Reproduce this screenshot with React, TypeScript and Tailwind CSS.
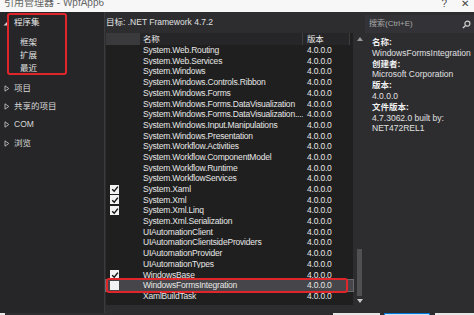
import React from 'react';

type Row = { name: string; checked?: boolean; box?: boolean; selected?: boolean };

const rows: Row[] = [
  { name: 'System.Web.Routing' },
  { name: 'System.Web.Services' },
  { name: 'System.Windows' },
  { name: 'System.Windows.Controls.Ribbon' },
  { name: 'System.Windows.Forms' },
  { name: 'System.Windows.Forms.DataVisualization' },
  { name: 'System.Windows.Forms.DataVisualization....' },
  { name: 'System.Windows.Input.Manipulations' },
  { name: 'System.Windows.Presentation' },
  { name: 'System.Workflow.Activities' },
  { name: 'System.Workflow.ComponentModel' },
  { name: 'System.Workflow.Runtime' },
  { name: 'System.WorkflowServices' },
  { name: 'System.Xaml', checked: true, box: true },
  { name: 'System.Xml', checked: true, box: true },
  { name: 'System.Xml.Linq', checked: true, box: true },
  { name: 'System.Xml.Serialization' },
  { name: 'UIAutomationClient' },
  { name: 'UIAutomationClientsideProviders' },
  { name: 'UIAutomationProvider' },
  { name: 'UIAutomationTypes' },
  { name: 'WindowsBase', checked: true, box: true },
  { name: 'WindowsFormsIntegration', box: true, selected: true },
  { name: 'XamlBuildTask' },
];

function Arrow({ open }: { open?: boolean }) {
  return open ? (
    <svg width="6" height="6" viewBox="0 0 6 6" className="shrink-0">
      <path d="M5.5 0.5 L5.5 5.5 L0.5 5.5 Z" fill="#d0d0d0" />
    </svg>
  ) : (
    <svg width="6" height="7" viewBox="0 0 6 7" className="shrink-0">
      <path d="M1 0.8 L4.8 3.5 L1 6.2 Z" fill="none" stroke="#bdbdbd" strokeWidth="0.9" />
    </svg>
  );
}

function CheckBox({ checked }: { checked?: boolean }) {
  return (
    <div className="w-[9px] h-[9px] bg-[#f2f2f2] flex items-center justify-center">
      {checked && (
        <svg width="8" height="8" viewBox="0 0 8 8">
          <path d="M1.2 4.2 L3.2 6.2 L6.9 1.6" fill="none" stroke="#111" strokeWidth="1.4" />
        </svg>
      )}
    </div>
  );
}

export default function App() {
  return (
    <div className="w-[474px] h-[315px] overflow-hidden flex flex-col bg-[#2d2d30] font-['Liberation_Sans','Noto_Sans_CJK_SC',sans-serif] text-[#dcdcdc]">
      {/* title bar, cut off at the top */}
      <div className="h-[12px] bg-[#f7f7f7] flex items-end justify-between overflow-hidden">
        <span className="text-[10px] leading-none text-[#666] ml-[4px] mb-[4px]">引用管理器 - WpfApp6</span>
        <div className="flex items-end gap-[14px] mr-[5px] mb-[3px] text-[10px] leading-none text-[#444]">
          <span>?</span>
          <span>✕</span>
        </div>
      </div>

      <div className="h-[301px] flex">
        {/* left nav */}
        <div className="w-[105px] shrink-0 bg-[#262628] border-r border-[#3a3a3c] relative text-[8.5px] leading-none">
          <div className="pt-[4px]">
            <div className="h-[13px] flex items-center gap-[5px] pl-[3px]">
              <Arrow open />
              <span className="text-[#e8e8e8]">程序集</span>
            </div>
            <div className="mt-[6.5px] pl-[20px] text-[#e0e0e0]">
              <div className="h-[13px] flex items-center">框架</div>
              <div className="h-[13px] flex items-center">扩展</div>
              <div className="h-[13px] flex items-center">最近</div>
            </div>
            <div className="mt-[4.5px]">
              {['项目', '共享的项目', 'COM', '浏览'].map((t) => (
                <div key={t} className="h-[18.3px] flex items-center gap-[4px] pl-[4px]">
                  <Arrow />
                  <span className="text-[#d8d8d8]">{t}</span>
                </div>
              ))}
            </div>
          </div>
          <div className="absolute left-[7px] top-[1px] w-[60px] h-[62px] border-2 border-[#e0262b] rounded-[3px]" />
        </div>

        {/* center */}
        <div className="w-[260px] shrink-0 flex flex-col">
          <div className="h-[21px] flex items-center pl-[1px] text-[8.5px] leading-none text-[#e0e0e0]">
            目标: .NET Framework 4.7.2
          </div>
          <div className="h-[272px] flex">
            <div className="w-[248px] ml-[1px] bg-[#1f1f1f] text-[8.5px] tracking-[-0.2px] leading-none">
              <div className="h-[12px] flex items-stretch">
                <div className="w-[34px] bg-[#3a3a3c]" />
                <div className="w-[163px] bg-[#262628] border-r border-[#3c3c3c] flex items-center pl-[3px] text-[#e8e8e8]">名称</div>
                <div className="w-[47px] bg-[#262628] border-r border-[#3c3c3c] flex items-center pl-[4px] text-[#e8e8e8]">版本</div>
              </div>
              {rows.map((r) => (
                <div
                  key={r.name}
                  className={`h-[10.7px] flex items-center relative ${r.selected ? 'bg-[#46464a] outline outline-1 outline-[#6a6a6e]' : ''}`}
                >
                  <div className="w-[34px] pl-[4px] flex items-center">{r.box && <CheckBox checked={r.checked} />}</div>
                  <div className="w-[163px] pl-[3px] whitespace-nowrap overflow-hidden text-[#e6e6e6]">{r.name}</div>
                  <div className="w-[47px] pl-[4px] text-[#e6e6e6]">4.0.0.0</div>
                  {r.selected && (
                    <div className="absolute left-0 right-[5px] top-[-2px] bottom-[-2px] border-2 border-[#e0262b] rounded-[3px]" />
                  )}
                </div>
              ))}
            </div>
            {/* scrollbar */}
            <div className="w-[11px] flex flex-col items-center pt-[4px] pb-[2px] ml-[1px]">
              <svg width="6" height="4" viewBox="0 0 6 4"><path d="M0 4 L3 0 L6 4 Z" fill="#9a9a9a" /></svg>
              <div className="flex-1" />
              <div className="w-[5px] h-[47px] bg-[#505052]" />
              <svg width="6" height="4" viewBox="0 0 6 4" className="mt-[3px]"><path d="M0 0 L6 0 L3 4 Z" fill="#c8c8c8" /></svg>
            </div>
          </div>
        </div>

        {/* right details */}
        <div className="flex-1 flex flex-col">
          <div className="h-[18px] mt-[3px] bg-[#333337] flex items-center justify-between pl-[4px] pr-[3px] text-[8px] leading-none text-[#a8a8a8]">
            <span>搜索(Ctrl+E)</span>
            <svg width="9" height="9" viewBox="0 0 10 10">
              <circle cx="6" cy="4" r="2.8" fill="none" stroke="#d0d0d0" strokeWidth="1.3" />
              <path d="M4 6 L1 9" stroke="#d0d0d0" strokeWidth="1.5" />
            </svg>
          </div>
          <div className="pt-[4px] pl-[7px] text-[8.5px] text-[#e0e0e0]">
            {[
              ['名称:', true],
              ['WindowsFormsIntegration', false],
              ['创建者:', true],
              ['Microsoft Corporation', false],
              ['版本:', true],
              ['4.0.0.0', false],
              ['文件版本:', true],
              ['4.7.3062.0 built by:', false],
              ['NET472REL1', false],
            ].map(([t, b]) => (
              <div key={t as string} className={`h-[10.8px] leading-[10.8px] whitespace-nowrap ${b ? 'font-bold text-[#f0f0f0]' : ''}`}>
                {t as string}
              </div>
            ))}
          </div>
        </div>
      </div>

      {/* dialog buttons, only their top edge shows */}
      <div className="h-[2px] flex">
        <div className="w-[5px] bg-[#e8e8e8]" />
        <div className="w-[328px]" />
        <div className="w-[47px] bg-[#e6e6e6]" />
        <div className="w-[4px]" />
        <div className="w-[46px] bg-[#cce4f7] border-t border-x border-[#0078d7]" />
        <div className="w-[5px]" />
        <div className="flex-1 bg-[#e6e6e6]" />
      </div>
    </div>
  );
}
